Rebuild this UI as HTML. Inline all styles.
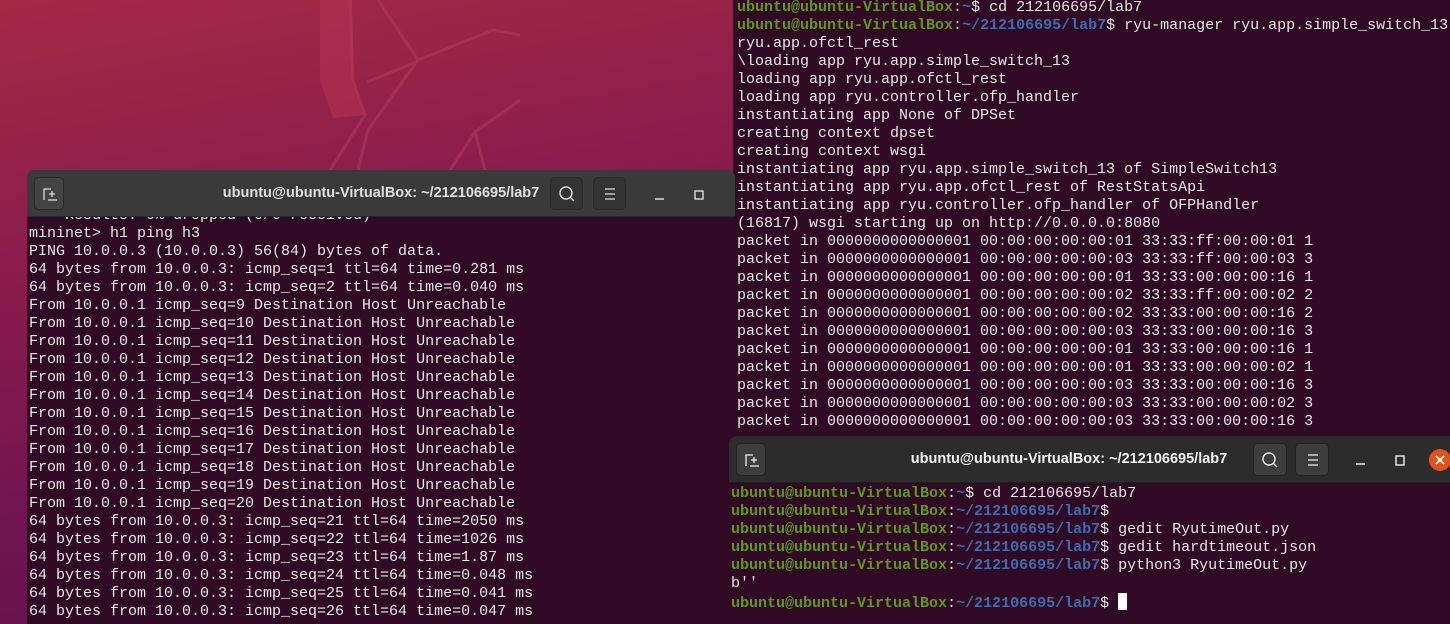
<!DOCTYPE html>
<html><head><meta charset="utf-8"><style>
*{margin:0;padding:0;box-sizing:border-box}
body{width:1450px;height:624px;overflow:hidden;position:relative;background:linear-gradient(170deg,#a32a45 0%,#8c1c4c 30%,#701550 60%,#5a1048 100%);font-family:"Liberation Mono",monospace}
.t{position:absolute;background:#300a24;overflow:hidden}
.txt{position:absolute;font-size:15px;line-height:18px;color:#e8e8e8;white-space:pre}
.g{color:#5f9a14;font-weight:bold}
.b{color:#3e6cb0;font-weight:bold}
.tb{position:absolute;font-family:"Liberation Sans",sans-serif;z-index:2}
.ttl{position:absolute;font-weight:bold;font-size:14.5px;color:#e0e0e0;top:0;width:100%;text-align:center}
.btn{position:absolute;border-radius:5px}
.cur{display:inline-block;width:9px;height:17px;background:#fff;vertical-align:-3px}
</style></head><body>
<svg style="position:absolute;left:0;top:0" width="1450" height="624"><g stroke="#b23a5c" stroke-width="3" fill="none" opacity=".55"><path d="M350 0 L353 80 L365 115 L330 170"/><path d="M378 0 L418 60 L493 30 L520 35"/><path d="M418 60 L368 130 L358 170"/><path d="M416 62 L367 82"/><path d="M520 100 L475 132 L450 170"/><path d="M475 132 L485 170"/></g><path d="M320 0 L352 0 L353 80 L365 115 L333 118 L320 80Z" fill="#b33552" opacity=".5"/></svg>

<!-- top right terminal -->
<div class="t" style="left:733px;top:0;width:717px;height:436px">
<div class="txt" style="left:4px;top:-1px"><span class="g">ubuntu@ubuntu-VirtualBox</span>:<span class="b">~</span>$ cd 212106695/lab7
<span class="g">ubuntu@ubuntu-VirtualBox</span>:<span class="b">~/212106695/lab7</span>$ ryu-manager ryu.app.simple_switch_13
ryu.app.ofctl_rest
\loading app ryu.app.simple_switch_13
loading app ryu.app.ofctl_rest
loading app ryu.controller.ofp_handler
instantiating app None of DPSet
creating context dpset
creating context wsgi
instantiating app ryu.app.simple_switch_13 of SimpleSwitch13
instantiating app ryu.app.ofctl_rest of RestStatsApi
instantiating app ryu.controller.ofp_handler of OFPHandler
(16817) wsgi starting up on http://0.0.0.0:8080
packet in 0000000000000001 00:00:00:00:00:01 33:33:ff:00:00:01 1
packet in 0000000000000001 00:00:00:00:00:03 33:33:ff:00:00:03 3
packet in 0000000000000001 00:00:00:00:00:01 33:33:00:00:00:16 1
packet in 0000000000000001 00:00:00:00:00:02 33:33:ff:00:00:02 2
packet in 0000000000000001 00:00:00:00:00:02 33:33:00:00:00:16 2
packet in 0000000000000001 00:00:00:00:00:03 33:33:00:00:00:16 3
packet in 0000000000000001 00:00:00:00:00:01 33:33:00:00:00:16 1
packet in 0000000000000001 00:00:00:00:00:01 33:33:00:00:00:02 1
packet in 0000000000000001 00:00:00:00:00:03 33:33:00:00:00:16 3
packet in 0000000000000001 00:00:00:00:00:03 33:33:00:00:00:02 3
packet in 0000000000000001 00:00:00:00:00:03 33:33:00:00:00:16 3</div>
</div>

<!-- left terminal -->
<div class="t" style="left:27px;top:170px;width:708px;height:454px;border-radius:8px 8px 0 0">
<div class="tb" style="left:0;top:0;width:708px;height:47px;background:#3a3a3a;border-bottom:1px solid #262626">
<div class="ttl" style="line-height:47px">ubuntu@ubuntu-VirtualBox: ~/212106695/lab7</div>
<div class="btn" style="left:7px;top:7px;width:30px;height:33px;background:#444;border:1px solid #2a2a2a"><svg width="30" height="33"><path d="M9 22V11h7M13 22h9M17 13v6M14 16h6" stroke="#ddd" stroke-width="1.3" fill="none"/></svg></div>
<div class="btn" style="left:523px;top:7px;width:33px;height:33px;background:#333;border:1px solid #2a2a2a"><svg width="33" height="33"><circle cx="15" cy="15" r="6" stroke="#ddd" stroke-width="1.4" fill="none"/><path d="M19 19l4 4" stroke="#ddd" stroke-width="1.4"/></svg></div>
<div class="btn" style="left:566px;top:7px;width:33px;height:33px;background:#333;border:1px solid #2a2a2a"><svg width="33" height="33"><path d="M11 11h10M11 16h10M11 21h10" stroke="#ddd" stroke-width="1.3"/></svg></div>
<svg style="position:absolute;left:620px;top:10px" width="90" height="30"><path d="M8 19h9" stroke="#ddd" stroke-width="1.5"/><rect x="48" y="11" width="8" height="8" stroke="#ddd" stroke-width="1.4" fill="none"/></svg>
</div>
<div class="txt" style="left:2px;top:37px">    Results: 0% dropped (0/0 received)
mininet> h1 ping h3
PING 10.0.0.3 (10.0.0.3) 56(84) bytes of data.
64 bytes from 10.0.0.3: icmp_seq=1 ttl=64 time=0.281 ms
64 bytes from 10.0.0.3: icmp_seq=2 ttl=64 time=0.040 ms
From 10.0.0.1 icmp_seq=9 Destination Host Unreachable
From 10.0.0.1 icmp_seq=10 Destination Host Unreachable
From 10.0.0.1 icmp_seq=11 Destination Host Unreachable
From 10.0.0.1 icmp_seq=12 Destination Host Unreachable
From 10.0.0.1 icmp_seq=13 Destination Host Unreachable
From 10.0.0.1 icmp_seq=14 Destination Host Unreachable
From 10.0.0.1 icmp_seq=15 Destination Host Unreachable
From 10.0.0.1 icmp_seq=16 Destination Host Unreachable
From 10.0.0.1 icmp_seq=17 Destination Host Unreachable
From 10.0.0.1 icmp_seq=18 Destination Host Unreachable
From 10.0.0.1 icmp_seq=19 Destination Host Unreachable
From 10.0.0.1 icmp_seq=20 Destination Host Unreachable
64 bytes from 10.0.0.3: icmp_seq=21 ttl=64 time=2050 ms
64 bytes from 10.0.0.3: icmp_seq=22 ttl=64 time=1026 ms
64 bytes from 10.0.0.3: icmp_seq=23 ttl=64 time=1.87 ms
64 bytes from 10.0.0.3: icmp_seq=24 ttl=64 time=0.048 ms
64 bytes from 10.0.0.3: icmp_seq=25 ttl=64 time=0.041 ms
64 bytes from 10.0.0.3: icmp_seq=26 ttl=64 time=0.047 ms</div>
</div>

<!-- bottom right terminal -->
<div class="t" style="left:729px;top:436px;width:721px;height:188px;border-radius:8px 0 0 0">
<div class="tb" style="left:0;top:0;width:721px;height:47px;background:#2c2c2c;border-bottom:1px solid #1e1e1e">
<div class="ttl" style="line-height:47px;color:#f2f2f2;width:680px">ubuntu@ubuntu-VirtualBox: ~/212106695/lab7</div>
<div class="btn" style="left:7px;top:7px;width:30px;height:33px;background:#3d3d3d;border:1px solid #232323"><svg width="30" height="33"><path d="M9 22V11h7M13 22h9M17 13v6M14 16h6" stroke="#eee" stroke-width="1.3" fill="none"/></svg></div>
<div class="btn" style="left:524px;top:7px;width:34px;height:33px;background:#3d3d3d;border:1px solid #232323"><svg width="34" height="33"><circle cx="15" cy="15" r="6" stroke="#eee" stroke-width="1.4" fill="none"/><path d="M19 19l4 4" stroke="#eee" stroke-width="1.4"/></svg></div>
<div class="btn" style="left:566px;top:7px;width:34px;height:33px;background:#3d3d3d;border:1px solid #232323"><svg width="34" height="33"><path d="M12 11h10M12 16h10M12 21h10" stroke="#eee" stroke-width="1.3"/></svg></div>
<svg style="position:absolute;left:620px;top:10px" width="101" height="30"><path d="M7 18h9" stroke="#eee" stroke-width="1.5"/><rect x="47" y="10" width="8" height="9" stroke="#eee" stroke-width="1.4" fill="none"/><circle cx="91" cy="14" r="11" fill="#e0531c"/><path d="M87 10l8 8M95 10l-8 8" stroke="#fff" stroke-width="1.6"/></svg>
</div>
<div class="txt" style="left:2px;top:49px"><span class="g">ubuntu@ubuntu-VirtualBox</span>:<span class="b">~</span>$ cd 212106695/lab7
<span class="g">ubuntu@ubuntu-VirtualBox</span>:<span class="b">~/212106695/lab7</span>$
<span class="g">ubuntu@ubuntu-VirtualBox</span>:<span class="b">~/212106695/lab7</span>$ gedit RyutimeOut.py
<span class="g">ubuntu@ubuntu-VirtualBox</span>:<span class="b">~/212106695/lab7</span>$ gedit hardtimeout.json
<span class="g">ubuntu@ubuntu-VirtualBox</span>:<span class="b">~/212106695/lab7</span>$ python3 RyutimeOut.py
b''
<span class="g">ubuntu@ubuntu-VirtualBox</span>:<span class="b">~/212106695/lab7</span>$ <span class="cur"></span></div>
</div>
</body></html>
